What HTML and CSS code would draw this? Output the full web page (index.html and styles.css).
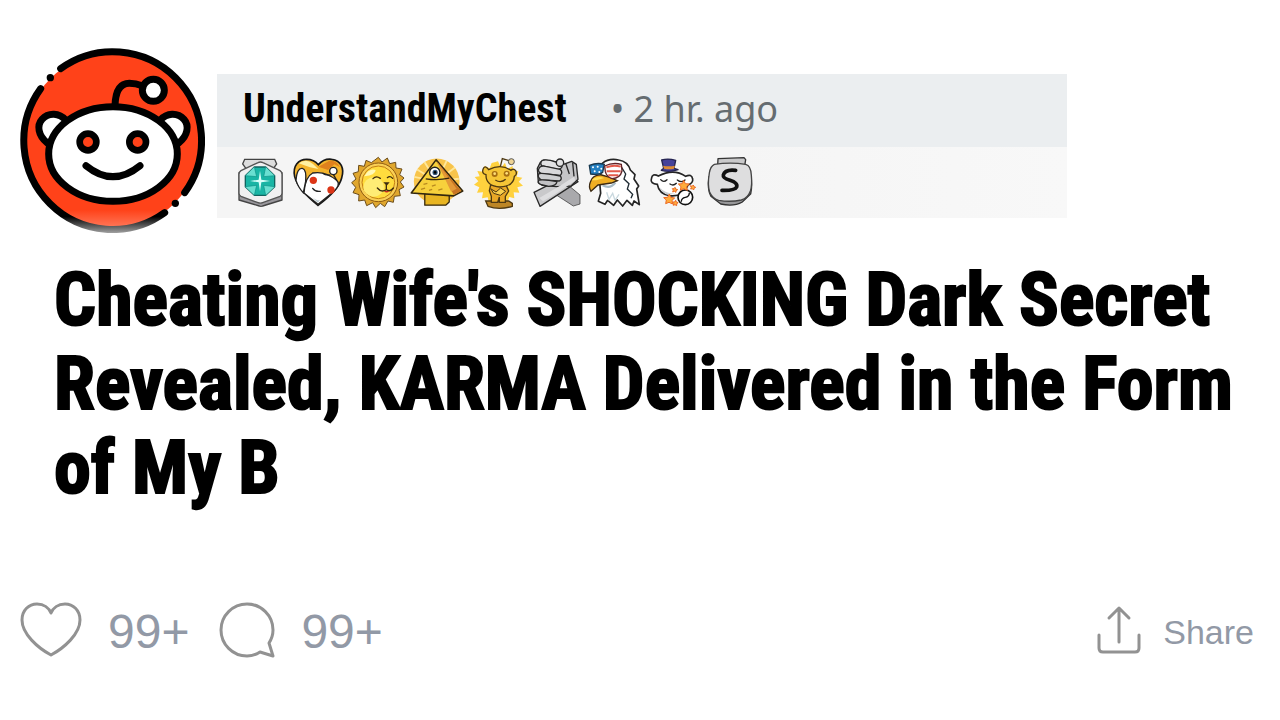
FILE: index.html
```html
<!DOCTYPE html>
<html lang="en">
<head>
    <meta charset="UTF-8">
    <meta name="viewport" content="width=device-width, initial-scale=1.0">
    <title>Reddit Post</title>
    <link rel="stylesheet" href="styles.css">
</head>
<body>
    <article class="post">
        <header class="post-header">
            <svg class="avatar" viewBox="30 24 555 555" role="img" aria-label="Reddit">
                <defs>
                    <linearGradient id="ring" gradientUnits="userSpaceOnUse" x1="0" y1="530" x2="0" y2="582">
                        <stop offset="0" stop-color="#000"/>
                        <stop offset="1" stop-color="#aaa"/>
                    </linearGradient>
                    <linearGradient id="disc" gradientUnits="userSpaceOnUse" x1="0" y1="510" x2="0" y2="565">
                        <stop offset="0" stop-color="#ff4219"/>
                        <stop offset="1" stop-color="#ff7a5c"/>
                    </linearGradient>
                </defs>
                <circle cx="308" cy="302" r="264" fill="url(#disc)"/>
                <g fill="none" stroke="url(#ring)" stroke-width="21" stroke-linecap="round">
                    <path d="M152 86A266.4 266.4 0 0 1 524 458"/>
                    <path d="M464 518A266.4 266.4 0 0 1 92 146"/>
                </g>
                <circle cx="121" cy="113" r="11"/>
                <circle cx="496" cy="490" r="11"/>
                <g fill="#fff" stroke="#000" stroke-width="21" stroke-linecap="round" stroke-linejoin="round">
                    <path d="M112 309C84 287 80 256 96 238C116 216 148 219 167 240"/>
                    <path d="M506 309C534 287 538 256 522 238C502 216 470 219 451 240"/>
                    <path d="M315 198C316 158 326 130 358 130Q378 130 396 137" fill="none"/>
                    <circle cx="430" cy="151" r="33"/>
                    <ellipse cx="309" cy="342" rx="193" ry="142"/>
                    <path d="M228 377Q309 443 390 377" fill="none"/>
                </g>
                <g fill="#ff4219" stroke="#000" stroke-width="20">
                    <circle cx="234" cy="306" r="25"/>
                    <circle cx="383" cy="306" r="25"/>
                </g>
            </svg>
            <div class="meta">
                <div class="byline">
                    <a class="author" href="#">UnderstandMyChest</a>
                    <span class="time">• 2 hr. ago</span>
                </div>
                <div class="awards">
                    <!-- platinum -->
                    <svg viewBox="9 18 162 162" role="img" aria-label="Platinum">
                        <path d="M44 28H134L140 42L130 56H48L38 42Z" fill="#ddd" stroke="#444" stroke-width="4"/>
                        <path d="M27 68V150L88 168Q93 170 98 168L156 150V68Z" fill="#9a989d" stroke="#444" stroke-width="4" stroke-linejoin="round"/>
                        <path d="M84 38Q91 34 99 38L150 62Q156 66 156 73V130Q156 136 150 139L98 158Q91 161 84 158L33 139Q27 136 27 130V73Q27 66 33 62Z" fill="#f0f0f1" stroke="#555" stroke-width="4"/>
                        <path d="M73 51H107L134 77V110L107 136H73L46 110V77Z" fill="#19b5a5" stroke="#11635f" stroke-width="4" stroke-linejoin="round"/>
                        <path d="M73 51L80 80L46 77M107 51L101 80L134 77M46 110L80 106L73 136M134 110L101 106L107 136" fill="#69dfd1" stroke="#0c9187" stroke-width="2"/>
                        <path d="M90 62L94 89L121 93L94 97L90 124L86 97L60 93L86 89Z" fill="#d8fffa"/>
                    </svg>
                    <!-- heart -->
                    <svg viewBox="186 18 162 162" role="img" aria-label="Wholesome">
                        <path d="M264 166Q204 119 194 80C187 48 205 28 230 28Q252 28 265 44Q282 25 305 28C333 31 344 55 335 84Q326 120 264 166Z" fill="#f4b52d" stroke="#171717" stroke-width="5"/>
                        <path d="M206 40Q228 24 249 42L265 57L240 52Z" fill="#fff0a1"/>
                        <path d="M265 50L298 32Q319 30 330 52L313 43L294 60Z" fill="#df811d"/>
                        <path d="M222 129Q225 81 248 69Q286 62 320 91Q335 105 306 129L264 163Z" fill="#fff" stroke="#222" stroke-width="4"/>
                        <path d="M198 91Q201 53 217 55Q230 58 227 94L220 128Q205 113 198 91Z" fill="#fff" stroke="#222" stroke-width="4"/>
                        <path d="M278 70Q285 76 301 75" fill="none" stroke="#222" stroke-width="4"/>
                        <path d="M310 73L320 91" stroke="#222" stroke-width="4"/>
                        <circle cx="310" cy="63" r="11" fill="#fff" stroke="#222" stroke-width="4"/>
                        <circle cx="250" cy="91" r="11" fill="#dc3517"/>
                        <circle cx="303" cy="120" r="11" fill="#dc3517"/>
                        <path d="M248 115Q256 126 271 124" fill="none" stroke="#222" stroke-width="4" stroke-linecap="round"/>
                        <path d="M243 137Q255 151 270 151L263 158Z" fill="#b9c8ce"/>
                    </svg>
                    <!-- sun lion -->
                    <svg viewBox="363 18 162 162" role="img" aria-label="Sun">
                        <path d="M445 22L456 36L472 24L479 41L497 37L498 54L516 57L509 74L522 84L511 96L522 111L507 119L511 137L493 139L490 157L474 153L464 170L451 160L437 173L428 158L410 167L404 150L386 153L387 134L369 128L377 112L365 98L378 87L369 70L385 65L386 46L403 49L408 31L424 38Z" fill="#e0a72e" stroke="#6b4d1c" stroke-width="3" stroke-linejoin="round"/>
                        <circle cx="445" cy="97" r="58" fill="#f9cf55" stroke="#8e5a11" stroke-width="3"/>
                        <circle cx="445" cy="97" r="49" fill="#ffdc3e" stroke="#c47e14" stroke-width="3"/>
                        <ellipse cx="431" cy="111" rx="31" ry="29" fill="#ffec75"/>
                        <path d="M403 79Q417 53 437 60Q436 76 403 79Z" fill="#fff8b6"/>
                        <g fill="none" stroke="#3b2a11" stroke-width="4" stroke-linecap="round">
                            <path d="M429 86Q438 76 451 85M472 83Q480 76 488 85M469 105V119Q454 129 442 114M469 119Q481 127 490 114"/>
                        </g>
                        <path d="M460 97H479L470 107Z" fill="#3b2a11"/>
                        <path d="M462 123Q470 132 478 123Z" fill="#c42a24"/>
                    </svg>
                    <!-- pyramid -->
                    <svg viewBox="18 18 168 162" role="img" aria-label="All-Seeing Upvote">
                        <circle cx="101" cy="94" r="71" fill="#f8c44b"/>
                        <path d="M101 94L40 57M101 94L31 80M101 94L63 34M101 94L132 30M101 94L158 51M101 94L170 86" stroke="#ffe799" stroke-width="6"/>
                        <path d="M64 132V168H129L140 158V132Z" fill="#e8b522" stroke="#33270e" stroke-width="4" stroke-linejoin="round"/>
                        <path d="M99 27L182 124L154 139L22 130Z" fill="#f7d13c" stroke="#33270e" stroke-width="5" stroke-linejoin="round"/>
                        <path d="M101 31L178 124L154 136Z" fill="#c87524"/>
                        <path d="M101 31L163 117L146 126Z" fill="#e49a37"/>
                        <path d="M67 86Q105 92 140 84" fill="none" stroke="#33270e" stroke-width="4"/>
                        <circle cx="95" cy="66" r="16" fill="#fff" stroke="#222" stroke-width="4"/>
                        <circle cx="96" cy="66" r="8" fill="#315477"/>
                        <circle cx="96" cy="66" r="4"/>
                        <path d="M60 103L72 100M86 109L98 105M52 119L65 115M106 121L119 117M77 122L87 119" stroke="#b98a20" stroke-width="4"/>
                    </svg>
                    <!-- golden snoo -->
                    <svg viewBox="192 18 162 162" role="img" aria-label="Argentium">
                        <path d="M279 34L288 53L300 38L306 57L323 48L323 67L340 63L335 80L352 83L341 95L354 107L337 112L343 128L326 127L328 145L313 141L306 158L292 150L279 166L267 151L252 160L248 142L231 145L234 127L216 128L223 112L207 104L220 94L209 81L224 79L217 63L236 65L238 48L254 55L260 39Z" fill="#ffd13e"/>
                        <path d="M242 153H311L322 160V169Q282 181 249 169Z" fill="#bd8625" stroke="#4e3912" stroke-width="4"/>
                        <path d="M257 105H303L311 123L301 139V157H283V141L278 157H259V139L253 122Z" fill="#e9a827" stroke="#4e3912" stroke-width="4"/>
                        <path d="M257 116L273 126L287 114L302 124L286 136L266 130Z" fill="#f8cf4f" stroke="#4e3912" stroke-width="3"/>
                        <path d="M251 59Q239 43 234 58Q230 71 243 74Q242 108 285 111Q326 109 328 79Q338 73 332 62Q325 54 318 61Q288 40 251 59Z" fill="#f5c536" stroke="#4e3912" stroke-width="4"/>
                        <path d="M286 50L292 26L312 32" fill="none" stroke="#4e3912" stroke-width="4"/>
                        <circle cx="319" cy="35" r="9" fill="#eed394" stroke="#555" stroke-width="3"/>
                        <circle cx="269" cy="72" r="9" fill="#a76f13"/>
                        <circle cx="305" cy="71" r="9" fill="#a76f13"/>
                        <circle cx="269" cy="71" r="4" fill="#ffe07b"/>
                        <circle cx="305" cy="70" r="4" fill="#ffe07b"/>
                        <path d="M271 90Q287 101 302 88" fill="none" stroke="#4e3912" stroke-width="4"/>
                    </svg>
                    <!-- clasped hands -->
                    <svg viewBox="369 18 162 162" role="img" aria-label="Bro">
                        <g stroke="#292929" stroke-width="4" stroke-linejoin="round">
                            <path d="M437 105L470 89L525 135V162L505 168L440 126Z" fill="#a9a9ac" stroke-width="2"/>
                            <path d="M506 82L519 95L405 169L387 127L440 100Z" fill="#c9c9cb"/>
                            <path d="M406 37L416 30L453 36L475 43L500 34L514 43L519 88L498 108L455 110L411 106L400 98L397 55Z" fill="#c5c5c7"/>
                            <path d="M412 31Q427 27 453 36L471 44Q473 56 459 58L411 48Q403 40 412 31Z" fill="#e3e3e4"/>
                            <path d="M404 52Q410 46 422 49L465 58Q475 66 466 76L408 70Q395 64 404 52Z" fill="#d8d8da"/>
                            <path d="M402 71Q409 67 466 78Q473 87 463 93L409 90Q395 82 402 71Z" fill="#cecfd1"/>
                            <path d="M402 90Q423 88 456 95Q454 108 431 109L407 103Q396 99 402 90Z" fill="#c2c2c5"/>
                            <path d="M482 40L493 72M503 38L507 79" fill="none"/>
                            <circle cx="465" cy="38" r="11" fill="#e3e3e4"/>
                        </g>
                        <path d="M403 144L470 104L507 80L511 92L445 136L414 154Z" fill="#dedee0"/>
                    </svg>
                    <!-- eagle -->
                    <svg viewBox="21 18 162 162" role="img" aria-label="'MURICA">
                        <path d="M67 40Q86 24 116 30Q143 34 151 60L165 74L162 87L176 108L170 117L178 164L162 153L157 166L141 151L128 168L112 150L101 166L83 151L75 163L55 154L62 130L59 97Z" fill="#fff" stroke="#252525" stroke-width="5" stroke-linejoin="round"/>
                        <path d="M123 49L137 72L132 87L147 101L142 117L158 133L153 145" fill="none" stroke="#1e2a32" stroke-width="4"/>
                        <path d="M68 106Q91 118 106 98" fill="none" stroke="#a6bac5" stroke-width="7"/>
                        <path d="M80 127L87 148L98 130L105 151L117 133" fill="none" stroke="#c9d8df" stroke-width="4"/>
                        <path d="M31 96Q38 73 65 75L90 82L112 92L94 99L54 105L33 124Q25 111 31 96Z" fill="#f0ae24" stroke="#3c2a13" stroke-width="4"/>
                        <path d="M35 91Q49 76 73 84L49 91Z" fill="#ffdf57"/>
                        <path d="M28 46Q51 37 73 43L68 67Q55 76 32 72Z" fill="#237fc1" stroke="#17384f" stroke-width="4"/>
                        <path d="M74 48Q98 36 124 43L126 63Q121 84 96 86Q80 81 76 65Z" fill="#fff" stroke="#602226" stroke-width="4"/>
                        <path d="M79 52Q101 43 122 50M80 64H122M85 76H115" fill="none" stroke="#e35a4b" stroke-width="6"/>
                        <g fill="#fff">
                            <circle cx="39" cy="52" r="3"/>
                            <circle cx="53" cy="50" r="3"/>
                            <circle cx="64" cy="56" r="3"/>
                            <circle cx="44" cy="64" r="3"/>
                            <circle cx="58" cy="66" r="3"/>
                        </g>
                    </svg>
                    <!-- snoo in a top hat -->
                    <svg viewBox="198 18 162 162" role="img" aria-label="Table Slap">
                        <path d="M235 78Q217 68 214 87Q210 101 232 103Q237 132 268 137Q311 142 324 105Q340 99 338 87Q335 70 317 79Q281 54 235 78Z" fill="#fff" stroke="#252525" stroke-width="5"/>
                        <path d="M239 112Q256 133 287 130L267 135Q246 131 239 112Z" fill="#cbd0d5"/>
                        <path d="M245 30Q264 24 287 31L282 55L294 59Q269 68 244 61L251 55Z" fill="#45419a" stroke="#252450" stroke-width="4" stroke-linejoin="round"/>
                        <path d="M249 47Q266 51 285 47L282 56Q267 60 252 56Z" fill="#dc8b36"/>
                        <path d="M242 89Q251 99 261 89M292 90Q304 100 315 90M270 102Q280 109 289 100" fill="none" stroke="#222" stroke-width="4" stroke-linecap="round"/>
                        <circle cx="316" cy="142" r="22" fill="#fff" stroke="#111" stroke-width="5"/>
                        <path d="M304 155Q304 144 316 142T328 128" fill="none" stroke="#111" stroke-width="4"/>
                        <g fill="#ffac3c" stroke="#ed6a24" stroke-width="3" stroke-linejoin="round">
                            <path d="M311 91L316 101L328 102L320 110L322 121L311 116L301 121L303 110L295 102L307 101Z"/>
                            <path d="M268 132L272 142L284 144L276 151L278 162L267 157L257 161L259 150L251 143L263 142Z"/>
                            <path d="M285 112L287 117L293 119L288 122L288 127L283 124L278 126L280 120L277 116L282 116Z"/>
                            <path d="M340 105L342 110L347 112L342 115L341 120L337 116L332 117L334 112L331 107L336 109Z"/>
                            <path d="M287 151L289 156L294 158L290 162L290 167L285 164L280 166L281 160L278 156L284 156Z"/>
                        </g>
                    </svg>
                    <!-- silver -->
                    <svg viewBox="375 18 162 162" role="img" aria-label="Silver">
                        <path d="M414 26L492 23L497 29L494 47H413Z" fill="#c9c9ca" stroke="#333" stroke-width="4" stroke-linejoin="round"/>
                        <path d="M387 80Q381 119 393 139L422 162Q461 171 487 156L512 132Q518 105 512 78Z" fill="#98989a" stroke="#333" stroke-width="4"/>
                        <path d="M403 43Q452 36 497 43Q513 47 514 76Q517 105 511 124Q503 145 484 150Q451 157 416 151Q399 147 389 127Q382 105 388 69Q391 49 403 43Z" fill="#dededf" stroke="#444" stroke-width="4"/>
                        <path d="M467 61Q435 57 430 75Q428 84 450 91Q474 99 470 111Q465 122 426 121" fill="none" stroke="#111" stroke-width="11" stroke-linecap="round"/>
                    </svg>
                </div>
            </div>
        </header>

        <h1 class="title">Cheating Wife's SHOCKING Dark Secret Revealed, KARMA Delivered in the Form of My B</h1>

        <footer class="actions">
            <button class="action" type="button" aria-label="Like, 99+">
                <svg class="icon-heart" viewBox="0 0 62 56">
                    <path d="M31 53C18 46 2 32 2 18C2 8 9 2 17 2C24 2 29 6 31 11C33 6 38 2 45 2C53 2 60 8 60 18C60 32 44 46 31 53Z"/>
                </svg>
                <span>99+</span>
            </button>
            <button class="action" type="button" aria-label="Comments, 99+">
                <svg class="icon-comment" viewBox="0 0 56 56">
                    <path d="M50 41Q54 35 54 28A26 26 0 1 0 28 54Q35 54 41 50L54 54Z"/>
                </svg>
                <span>99+</span>
            </button>
            <button class="action share" type="button">
                <svg class="icon-share" viewBox="0 0 44 50">
                    <path d="M2 30V43Q2 47 6 47H38Q42 47 42 43V30M22 37V3M12 13L22 3L32 13"/>
                </svg>
                <span>Share</span>
            </button>
        </footer>
    </article>
</body>
</html>
```

FILE: styles.css
```css
* {
    box-sizing: border-box;
}

body {
    margin: 0;
    background-color: #fff;
    font-family: 'Liberation Sans', Arial, sans-serif;
}

.post {
    display: flex;
    flex-direction: column;
    min-height: 100vh;
    padding: 48px 26px 58px 20px;
}

.post-header {
    display: flex;
    align-items: flex-start;
    gap: 12px;
}

.avatar {
    flex: none;
    width: 185px;
    height: 185px;
}

.meta {
    flex: 1;
    max-width: 850px;
    margin-top: 26px;
}

.byline {
    display: flex;
    align-items: center;
    gap: 44px;
    height: 73px;
    padding: 0 26px 4px;
    background-color: #ebeef0;
}

.author {
    font-family: 'Roboto Condensed', 'Arial Narrow', sans-serif;
    font-size: 40px;
    font-weight: bold;
    color: #000;
    text-decoration: none;
}

.time {
    font-family: 'Noto Sans', 'Open Sans', sans-serif;
    font-size: 36px;
    color: #656c70;
}

.awards {
    display: flex;
    align-items: center;
    gap: 5px;
    height: 71px;
    padding: 0 16px;
    background: linear-gradient(to right, #f5f5f5 60%, #f8f8f8);
}

.awards svg {
    width: 54px;
    height: 54px;
}

.title {
    margin: 25px 0 0;
    padding: 0 0 0 34px;
    font-family: 'Roboto Condensed', 'Arial Narrow', sans-serif;
    font-size: 74px;
    font-weight: bold;
    line-height: 84px;
    color: #000;
    -webkit-text-stroke: 2px #000;
}

.actions {
    display: flex;
    align-items: center;
    gap: 30px;
    margin-top: auto;
}

.action {
    display: flex;
    align-items: center;
    gap: 26px;
    padding: 0;
    border: none;
    background: none;
    font-family: inherit;
    font-size: 48px;
    line-height: 60px;
    color: #9299a6;
    cursor: pointer;
}

.action span {
    padding-top: 4px;
}

.action svg {
    fill: none;
    stroke: #929292;
    stroke-width: 3;
    stroke-linecap: round;
    stroke-linejoin: round;
}

.icon-heart {
    width: 62px;
    height: 56px;
}

.icon-comment {
    width: 56px;
    height: 56px;
}

.share {
    gap: 22px;
    margin-left: auto;
    font-size: 34px;
}

.icon-share {
    width: 44px;
    height: 50px;
}
```
